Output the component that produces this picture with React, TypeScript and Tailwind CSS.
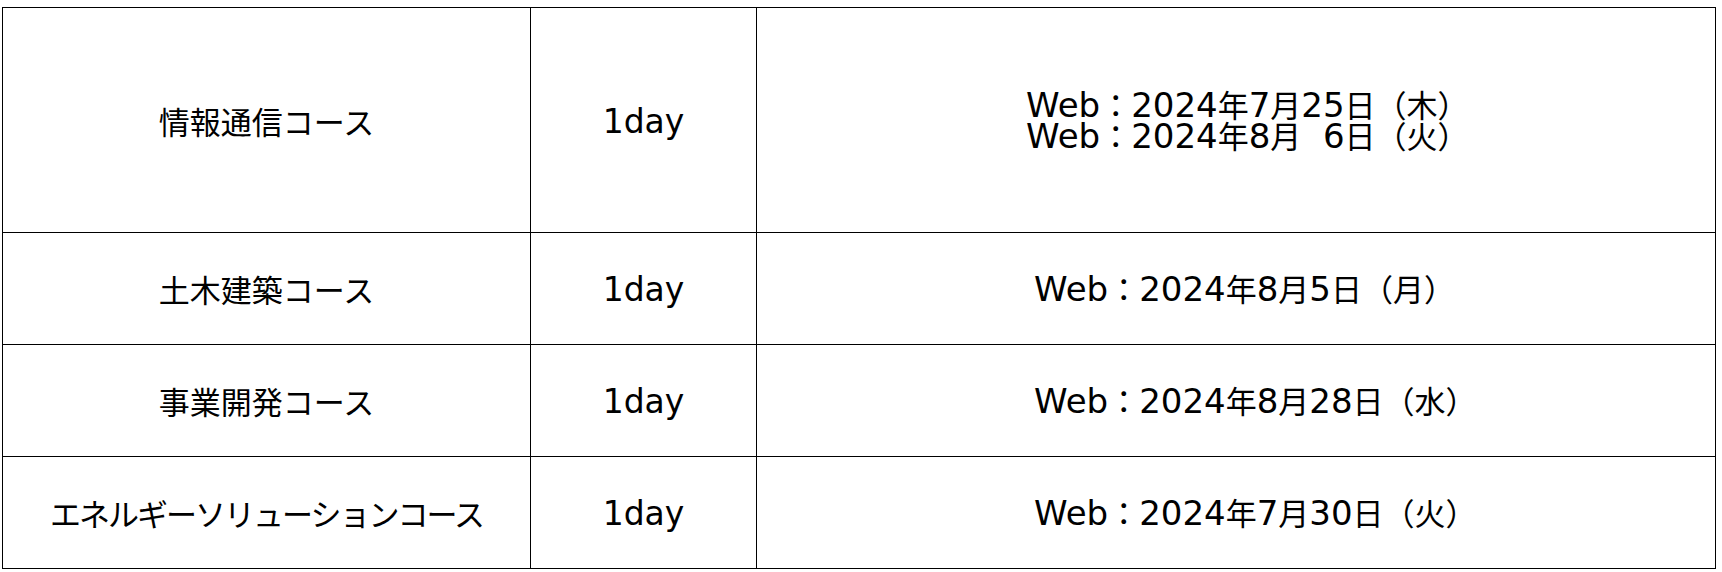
const rows = [
  {
    name: "情報通信コース",
    dates: ["Web：2024年7月25日（木）", "Web：2024年8月\u00a0\u00a06日（火）"],
    tall: true,
  },
  { name: "土木建築コース", dates: ["Web：2024年8月5日（月）"] },
  { name: "事業開発コース", dates: ["Web：2024年8月28日（水）"] },
  { name: "エネルギーソリューションコース", dates: ["Web：2024年7月30日（火）"], narrow: true },
];

// latin runs get a wider face, kanji/kana stay in Noto CJK
const Mixed = ({ text, big }: { text: string; big?: boolean }) => (
  <>
    {text.split(/([A-Za-z0-9\u00a0]+)/).map((part, i) =>
      /^[A-Za-z0-9\u00a0]+$/.test(part) ? (
        <span
          key={i}
          className={big ? "font-['DejaVu_Sans',sans-serif] text-[34px]" : "font-['DejaVu_Sans',sans-serif] text-[33px]"}
        >
          {part}
        </span>
      ) : (
        <span key={i}>{part}</span>
      )
    )}
  </>
);

const App = () => {
  return (
    <div className="w-screen h-screen bg-white pl-[2px] pt-[7px] font-['Noto_Sans_CJK_JP',sans-serif] text-black">
      <table className="border-collapse table-fixed w-[1714px] text-[31px] leading-[29px]">
        <colgroup>
          <col className="w-[528px]" />
          <col className="w-[226px]" />
          <col />
        </colgroup>
        <tbody>
          {rows.map((r) => (
            <tr key={r.name} className={r.tall ? "h-[225px]" : "h-[112px]"}>
              <td className={`border border-black text-center align-middle ${r.narrow ? "tracking-[-2px]" : ""}`}>
                {r.name}
              </td>
              <td className="border border-black text-center align-middle">
                <Mixed text="1day" />
              </td>
              <td className={`border border-black text-left align-middle ${r.tall ? "pl-[269px]" : "pl-[277px]"}`}>
                {r.dates.map((d) => (
                  <div key={d} className="whitespace-nowrap">
                    <Mixed text={d} big />
                  </div>
                ))}
              </td>
            </tr>
          ))}
        </tbody>
      </table>
    </div>
  );
};

export default App;
